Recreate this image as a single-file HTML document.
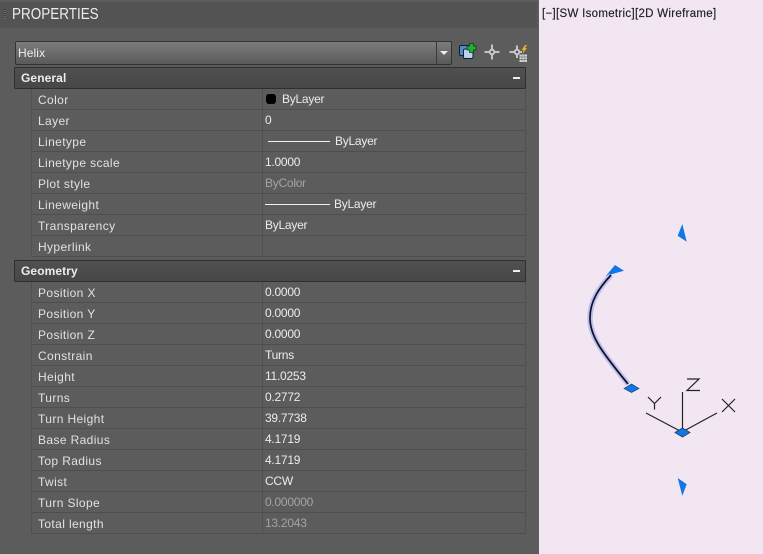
<!DOCTYPE html>
<html><head><meta charset="utf-8">
<style>
*{box-sizing:border-box;margin:0;padding:0}
html,body{width:763px;height:554px;overflow:hidden;background:#f2e6f3}
body{position:relative;font-family:"Liberation Sans",sans-serif;font-size:12px;letter-spacing:.38px;color:#e8e8e8}
.a{position:absolute}
#panel{left:0;top:0;width:539px;height:554px;background:#5c5c5c}
#title{left:0;top:2px;width:537px;height:26px;background:#535353}
#ttl{left:12px;top:6px;font-size:15.500px;letter-spacing:0;color:#ededed;line-height:18px;transform:scaleX(.87);transform-origin:0 0}
#combo{left:15px;top:41px;width:437px;height:24px;border:1px solid #333;border-radius:2px;background:linear-gradient(#7c7c7c,#5a5a5a)}
#combo span{position:absolute;left:2px;top:4px;line-height:14px;color:#eee;letter-spacing:.1px}
#comboBtn{left:436px;top:42px;width:1px;height:22px;background:#3a3a3a}
.hdr{position:absolute;left:14px;width:512px;height:22px;border:1px solid #2f2f2f;border-radius:1px;background:linear-gradient(#505050,#474747);font-weight:bold;color:#ececec;line-height:20px;padding-left:6px;font-size:12px;letter-spacing:.1px}
.hdr i{position:absolute;right:5px;top:9px;width:7px;height:2px;background:#eee}
.row{position:absolute;left:31px;width:495px;height:21px;border-bottom:1px solid #4e4e4e;border-left:1px solid #505050;border-right:1px solid #505050}
.row b{position:absolute;font-weight:normal;left:6px;top:4px;line-height:14px;color:#e2e2e2}
.row u{position:absolute;text-decoration:none;left:233px;top:3px;line-height:14px;color:#ececec;letter-spacing:-.25px}
.row s{position:absolute;left:230px;top:0;width:1px;height:20px;background:#505050}
.row u.g{color:#a3a3a3}
.ln{position:absolute;height:1px;background:#f0f0f0;top:10px}
#vp{left:542px;top:7px;color:#1c1c2a;line-height:14px;font-size:11.500px;letter-spacing:.3px;-webkit-text-stroke:.15px #1c1c2a}
</style></head><body>
<div class="a" id="panel"></div>
<div class="a" id="title"></div>
<div class="a" style="left:4px;top:9px;width:2px;height:10px;background:repeating-linear-gradient(#3d3d3d 0 1px,#6a6a6a 1px 2px)"></div>
<div class="a" id="ttl">PROPERTIES</div>
<div class="a" id="combo"><span>Helix</span></div>
<div class="a" id="comboBtn"></div>
<div class="a" style="left:440px;top:51px;border-left:4px solid transparent;border-right:4px solid transparent;border-top:4px solid #eee"></div>

<svg class="a" style="left:455px;top:40px" width="75" height="24" viewBox="0 0 75 24">
<rect x="4.500" y="5.500" width="10" height="10" rx="1.500" fill="#4f8cd0" stroke="#10202e"/>
<rect x="8.500" y="9" width="9.500" height="9.500" rx="1.500" fill="#b9d2ee" stroke="#10202e"/>
<path d="M14.500 3.500h4v2.500h2.500v4h-2.500v2.500h-4v-2.500H12V6h2.500z" fill="#1fae30" stroke="#0e3a12" stroke-width=".7"/>
<g fill="none" stroke="#cfcfcf" stroke-width="1.800">
<circle cx="37" cy="12" r="2.300"/><path d="M29.500 12h4.500M40 12h4.500M37 4.500V9M37 15v4.500"/>
<circle cx="62" cy="12" r="2.300"/><path d="M54.500 12h4.500M65 12h2M62 5.500V9M62 15v3"/>
</g>
<path d="M70 5l-3.500 5h2l-1 4 4.500-6h-2l2-3z" fill="#e8ae2c"/>
<rect x="64.500" y="14.500" width="7.500" height="7.500" fill="#d8d8d8"/>
<path d="M64.500 17h7.500M64.500 19.500h7.500" stroke="#666" stroke-width=".8"/>
<path d="M67 14.500v7.500M69.500 14.500v7.500" stroke="#888" stroke-width=".6"/>
</svg>

<div class="hdr" style="top:67px">General<i></i></div>
<div class="row" style="top:89px"><b>Color</b><s></s><span class="a" style="left:234px;top:5px;width:10px;height:10px;background:#000;border-radius:3px"></span><u style="left:250px">ByLayer</u></div>
<div class="row" style="top:110px"><b>Layer</b><s></s><u>0</u></div>
<div class="row" style="top:131px"><b>Linetype</b><s></s><span class="ln" style="left:236px;width:62px"></span><u style="left:303px">ByLayer</u></div>
<div class="row" style="top:152px"><b>Linetype scale</b><s></s><u>1.0000</u></div>
<div class="row" style="top:173px"><b>Plot style</b><s></s><u class="g">ByColor</u></div>
<div class="row" style="top:194px"><b>Lineweight</b><s></s><span class="ln" style="left:233px;width:65px"></span><u style="left:302px">ByLayer</u></div>
<div class="row" style="top:215px"><b>Transparency</b><s></s><u>ByLayer</u></div>
<div class="row" style="top:236px"><b>Hyperlink</b><s></s></div>

<div class="hdr" style="top:260px">Geometry<i></i></div>
<div class="row" style="top:282px"><b>Position X</b><s></s><u>0.0000</u></div>
<div class="row" style="top:303px"><b>Position Y</b><s></s><u>0.0000</u></div>
<div class="row" style="top:324px"><b>Position Z</b><s></s><u>0.0000</u></div>
<div class="row" style="top:345px"><b>Constrain</b><s></s><u>Turns</u></div>
<div class="row" style="top:366px"><b>Height</b><s></s><u>11.0253</u></div>
<div class="row" style="top:387px"><b>Turns</b><s></s><u>0.2772</u></div>
<div class="row" style="top:408px"><b>Turn Height</b><s></s><u>39.7738</u></div>
<div class="row" style="top:429px"><b>Base Radius</b><s></s><u>4.1719</u></div>
<div class="row" style="top:450px"><b>Top Radius</b><s></s><u>4.1719</u></div>
<div class="row" style="top:471px"><b>Twist</b><s></s><u>CCW</u></div>
<div class="row" style="top:492px"><b>Turn Slope</b><s></s><u class="g">0.000000</u></div>
<div class="row" style="top:513px"><b>Total length</b><s></s><u class="g">13.2043</u></div>

<div class="a" id="vp">[&#8722;][SW Isometric][2D Wireframe]</div>

<svg class="a" style="left:539px;top:0" width="224" height="554" viewBox="539 0 224 554">
<path d="M682.300 224L677.700 235.700L686.700 241.700z" fill="#0f78e6"/>
<path d="M677.700 478L686.700 484.300L682.300 495.700z" fill="#0f78e6"/>
<path d="M606 275.700L615 265L624 270.700z" fill="#0f78e6"/>
<path d="M611 275C600 287 590 300 590 318C590 336 601 351 628 384" fill="none" stroke="#a9aee6" stroke-width="5.500" opacity=".7"/>
<path d="M611 275C600 287 590 300 590 318C590 336 601 351 628 384" fill="none" stroke="#0c1030" stroke-width="1.700"/>
<path d="M624 388.500L631.500 384L639 388.500L631.500 392.500z" fill="#0f78e6" stroke="#1a3a5c" stroke-width=".7"/>
<g fill="none" stroke="#222" stroke-width="1.200">
<path d="M682.500 432V392M682 432L646 413M682 432L717 413"/>
<path d="M687 379H699L687 390.500H700"/>
<path d="M648 397L654.500 403.500L661 397M654.500 403.500V409.500"/>
<path d="M722 399L735 412M735 399L722 412"/>
</g>
<path d="M675 432.500L682.500 428L690 432.500L682.500 437z" fill="#0f78e6" stroke="#1a3a5c" stroke-width=".8"/>
</svg>
</body></html>
